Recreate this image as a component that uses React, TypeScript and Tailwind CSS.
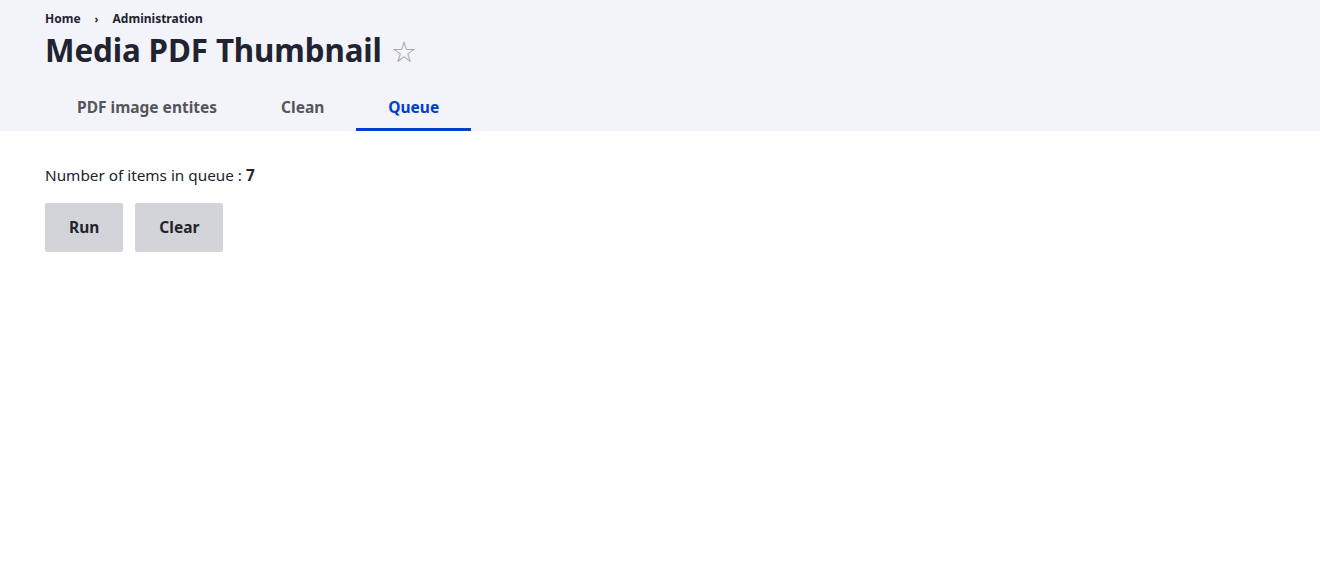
export default function App() {
  const font = { fontFamily: '"Noto Sans", "Open Sans", sans-serif' };
  return (
    <div className="min-h-[562px] bg-white text-[#222330]" style={font}>
      <div className="bg-[#f3f4f9] px-[45px] pt-[11px]">
        <nav className="flex items-center text-[12px] font-bold leading-[16px] text-[#222330]">
          <span>Home</span>
          <span className="mx-[14px] text-[11px]">›</span>
          <span>Administration</span>
        </nav>
        <div className="mt-[3px] flex items-center">
          <h1 className="text-[31.3px] font-bold leading-[40px] tracking-[-0.1px]">Media PDF Thumbnail</h1>
          <span className="ml-[9px] text-[29px] leading-none text-[#9a9aa3]">☆</span>
        </div>
        <div className="mt-[21px] flex">
          {[
            { label: "PDF image entites", active: false },
            { label: "Clean", active: false },
            { label: "Queue", active: true },
          ].map((t) => (
            <div
              key={t.label}
              className={
                "h-[40px] px-[32px] pt-[4px] text-[15.5px] font-bold leading-[24px] " +
                (t.active
                  ? "border-b-[3px] border-[#003ecc] text-[#003ecc]"
                  : "text-[#55565b]")
              }
            >
              {t.label}
            </div>
          ))}
        </div>
      </div>
      <div className="px-[45px] pt-[32px]">
        <p className="text-[15.3px] leading-[24px]">
          Number of items in queue : <strong>7</strong>
        </p>
        <div className="mt-[16px] flex gap-[12px]">
          <button className="h-[49px] rounded-[2px] bg-[#d3d4d9] px-[24px] text-[15.5px] font-bold text-[#232429]">Run</button>
          <button className="h-[49px] rounded-[2px] bg-[#d3d4d9] px-[24px] text-[15.5px] font-bold text-[#232429]">Clear</button>
        </div>
      </div>
    </div>
  );
}
